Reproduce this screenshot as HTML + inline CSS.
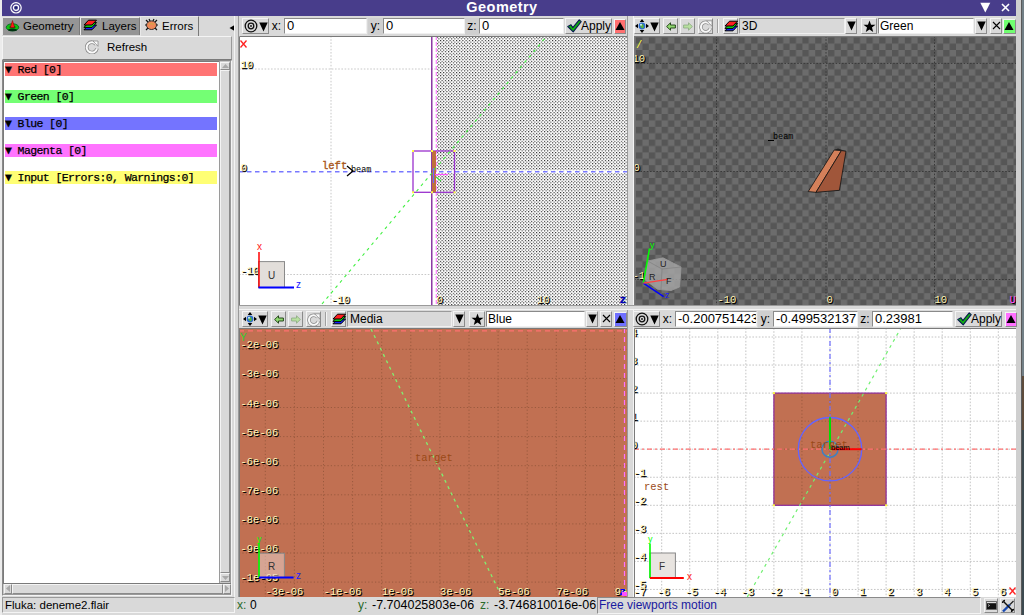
<!DOCTYPE html>
<html><head><meta charset="utf-8">
<style>
*{margin:0;padding:0;box-sizing:border-box}
html,body{width:1024px;height:615px;overflow:hidden;background:#d9d9d9;font-family:"Liberation Sans",sans-serif;font-size:12px;color:#000}
.a{position:absolute}
.mono{font-family:"Liberation Mono",monospace}
#title{left:2px;top:0;width:1022px;height:16px;background:#483d8b;color:#fff;font-weight:bold;font-size:14px;line-height:15px;text-align:center}
.tab{top:17px;height:18px;background:#959595;line-height:17px;font-size:11.5px;border-top:1px solid #e8e8e8;border-left:1px solid #e8e8e8;border-right:1px solid #7a7a7a}
.tab.sel{background:#d9d9d9;top:16px;height:20px}
.btn{border:1px solid;border-color:#f4f4f4 #8a8a8a #8a8a8a #f4f4f4;background:#d9d9d9}
.sunk{border:1px solid;border-color:#8a8a8a #f4f4f4 #f4f4f4 #8a8a8a}
.item{left:5px;width:212px;height:13px;line-height:13px;font-size:11.5px;letter-spacing:-0.6px;padding-left:0px;-webkit-text-stroke:0.25px #000}
.entry{background:#fff;border:1px solid;border-color:#8a8a8a #f0f0f0 #f0f0f0 #8a8a8a;height:16px;line-height:14px;padding-left:2px;font-size:13px;overflow:hidden;white-space:nowrap}
.cmb{background:#d9d9d9;border:1px solid;border-color:#9a9a9a #f0f0f0 #f0f0f0 #9a9a9a;height:17px;line-height:15px;padding-left:2px;font-size:12px;overflow:hidden;white-space:nowrap}
.lbl{height:17px;line-height:17px;font-size:12px;text-align:center}
.tb{height:17px;border:1px solid;border-color:#f4f4f4 #8a8a8a #8a8a8a #f4f4f4;background:#d9d9d9;text-align:center;line-height:15px;font-size:11px}
svg text{font-family:"Liberation Mono",monospace}
.ax{font-size:10.5px;fill:#fff4b8}
.axs{font-size:10.5px;fill:#000;stroke:#000;stroke-width:0.3}
</style></head><body>
<div class="a" style="left:0;top:0;width:2px;height:615px;background:#ececec"></div>
<div class="a" style="left:2px;top:0;width:1014px;height:16px;background:#483d8b"></div>
<div class="a" style="left:462px;top:0;width:80px;height:15px;color:#fff;font-weight:bold;font-size:14.5px;line-height:14px;text-align:center;letter-spacing:0.45px">Geometry</div>
<svg class="a" style="left:9px;top:1px" width="14" height="14" viewBox="0 0 14 14"><circle cx="7" cy="6.8" r="5.2" fill="none" stroke="#fff" stroke-width="1.2"/><circle cx="7" cy="6.8" r="2.6" fill="none" stroke="#fff" stroke-width="1.2"/><circle cx="7" cy="6.8" r="1" fill="#102070"/></svg>
<svg class="a" style="left:980px;top:2px" width="11" height="11" viewBox="0 0 11 11"><path d="M0.3 0.8 H10.3 L5.3 10.5 Z" fill="#fff"/></svg>
<svg class="a" style="left:1001px;top:3px" width="9" height="9" viewBox="0 0 9 9"><path d="M1 1 L8 8 M8 1 L1 8" stroke="#fff" stroke-width="1.6"/></svg>
<div class="a" style="left:1016px;top:0;width:5px;height:615px;background:#cfcfcf"></div>
<div class="a" style="left:1021px;top:0;width:1px;height:615px;background:#5a5a5a"></div>
<div class="a" style="left:1022px;top:0;width:2px;height:376px;background:#727f86"></div>
<div class="a" style="left:1022px;top:376px;width:2px;height:54px;background:#5e4c3c"></div>
<div class="a" style="left:1022px;top:430px;width:2px;height:185px;background:#3c4a50"></div>
<div class="a" style="left:2px;top:16px;width:196px;height:1px;background:#d9d9d9"></div>
<div class="a tab" style="left:2px;width:78px"><span style="position:absolute;left:20px;top:0px">Geometry</span></div>
<div class="a tab" style="left:80px;width:60px"><span style="position:absolute;left:21px;top:0px">Layers</span></div>
<div class="a tab sel" style="left:140px;width:59px"><span style="position:absolute;left:21px;top:1px">Errors</span></div>
<svg class="a" style="left:5px;top:19px" width="15" height="13" viewBox="0 0 15 13"><ellipse cx="7.5" cy="8.3" rx="6.3" ry="3.6" fill="#10c010" stroke="#062" stroke-width="0.8"/><ellipse cx="7.5" cy="8" rx="3" ry="1.6" fill="#0a5010"/><path d="M5.3 8.6 L7.5 1.5 L9.7 8.6 Z" fill="#ff1a1a" stroke="#800" stroke-width="0.5"/><ellipse cx="7.5" cy="11" rx="4.5" ry="1.2" fill="#031"/></svg>
<svg class="a" style="left:83px;top:19px" width="15" height="13" viewBox="0 0 15 13"><path d="M1 10.8 L5.5 6 H13.5 L9 10.8 Z" fill="#1020ff" stroke="#000" stroke-width="1"/><path d="M1 8.4 L5.5 3.6 H13.5 L9 8.4 Z" fill="#10e010" stroke="#000" stroke-width="1"/><path d="M1 6 L5.5 1.2 H13.5 L9 6 Z" fill="#ff2020" stroke="#000" stroke-width="1"/></svg>
<svg class="a" style="left:144px;top:18px" width="15" height="14" viewBox="0 0 15 14"><path d="M2 2 L4 4 M13 2 L11 4 M1 7 L3 7 M14 7 L12 7 M2 12 L4 10 M13 12 L11 10 M5 1 L6 3 M10 1 L9 3" stroke="#111" stroke-width="1.2"/><ellipse cx="7.5" cy="7.2" rx="5" ry="4.3" fill="#f08858" stroke="#222" stroke-width="0.9"/><path d="M5 6.5 Q7.5 4.5 10 6.5" stroke="#c8b040" stroke-width="0.9" fill="none"/></svg>
<svg class="a" style="left:229px;top:24px" width="7" height="8" viewBox="0 0 7 8"><path d="M6.5 0.5 V7.5 L0.5 4 Z" fill="#000"/></svg>
<div class="a" style="left:2px;top:36px;width:230px;height:24px;background:#d9d9d9;border:1px solid;border-color:#f4f4f4 #9a9a9a #7a7a7a #f4f4f4"></div>
<svg class="a" style="left:85px;top:40px" width="14" height="14" viewBox="0 0 14 14"><path d="M11.3 4.6 A5.2 5.2 0 1 0 12 8.4" fill="none" stroke="#8a8a8a" stroke-width="3.6"/><path d="M11.3 4.6 A5.2 5.2 0 1 0 12 8.4" fill="none" stroke="#fafafa" stroke-width="2"/><path d="M8 1 L13 1 L13 6.3 Z" fill="#fafafa" stroke="#8a8a8a" stroke-width="0.8"/></svg>
<div class="a" style="left:107px;top:39px;font-size:11.5px;line-height:17px">Refresh</div>
<div class="a" style="left:2px;top:60px;width:230px;height:536px;border:1px solid;border-color:#8a8a8a #f4f4f4 #f4f4f4 #8a8a8a"></div>
<div class="a" style="left:3px;top:61px;width:216px;height:522px;background:#fff;border-top:1px solid #7a7a7a;border-left:1px solid #7a7a7a"></div>
<div class="a item mono" style="top:63px;background:#ff7474">&#9660; Red [0]</div>
<div class="a item mono" style="top:90px;background:#74ff74">&#9660; Green [0]</div>
<div class="a item mono" style="top:117px;background:#7474ff">&#9660; Blue [0]</div>
<div class="a item mono" style="top:144px;background:#ff74ff">&#9660; Magenta [0]</div>
<div class="a item mono" style="top:171px;background:#ffff74">&#9660; Input [Errors:0, Warnings:0]</div>
<div class="a" style="left:219px;top:61px;width:12px;height:522px;background:#c8c8c8;border-left:1px solid #9a9a9a;border-right:1px solid #9a9a9a"></div>
<div class="a" style="left:220px;top:62px;width:10px;height:8px;background:#d9d9d9;border:1px solid;border-color:#f4f4f4 #8a8a8a #8a8a8a #f4f4f4"></div>
<svg class="a" style="left:222px;top:64px" width="7" height="4" viewBox="0 0 7 4"><path d="M0 4 L3.5 0 L7 4 Z" fill="#a8a8a8"/></svg>
<div class="a" style="left:220px;top:70px;width:10px;height:503px;background:#d9d9d9;border:1px solid;border-color:#f4f4f4 #8a8a8a #8a8a8a #f4f4f4"></div>
<div class="a" style="left:220px;top:573px;width:10px;height:9px;background:#d9d9d9;border:1px solid;border-color:#f4f4f4 #8a8a8a #8a8a8a #f4f4f4"></div>
<svg class="a" style="left:222px;top:576px" width="7" height="4" viewBox="0 0 7 4"><path d="M0 0 L3.5 4 L7 0 Z" fill="#a8a8a8"/></svg>
<div class="a" style="left:3px;top:583px;width:228px;height:12px;background:#c8c8c8;border-top:1px solid #7a7a7a;border-bottom:1px solid #9a9a9a"></div>
<div class="a" style="left:4px;top:584px;width:8px;height:10px;background:#d9d9d9;border:1px solid;border-color:#f4f4f4 #8a8a8a #8a8a8a #f4f4f4"></div>
<svg class="a" style="left:6px;top:585px" width="4" height="7" viewBox="0 0 4 7"><path d="M4 0 L0 3.5 L4 7 Z" fill="#a8a8a8"/></svg>
<div class="a" style="left:12px;top:584px;width:211px;height:10px;background:#d9d9d9;border:1px solid;border-color:#f4f4f4 #8a8a8a #8a8a8a #f4f4f4"></div>
<div class="a" style="left:223px;top:584px;width:8px;height:10px;background:#d9d9d9;border:1px solid;border-color:#f4f4f4 #8a8a8a #8a8a8a #f4f4f4"></div>
<svg class="a" style="left:225px;top:585px" width="4" height="7" viewBox="0 0 4 7"><path d="M0 0 L4 3.5 L0 7 Z" fill="#a8a8a8"/></svg>
<div class="a" style="left:2px;top:597px;width:233px;height:16px;border:1px solid;border-color:#9a9a9a #f4f4f4 #f4f4f4 #9a9a9a;line-height:14px;padding-left:2px;font-size:11.5px">Fluka: deneme2.flair</div>
<svg class="a" style="left:239px;top:36px" width="391" height="269" viewBox="239 36 391 269"><defs><pattern id="stip" x="0" y="0" width="3.2" height="3.2" patternUnits="userSpaceOnUse"><rect width="3.2" height="3.2" fill="#fff"/><rect x="0" y="0" width="1.05" height="1.05" fill="#111"/><rect x="1.6" y="1.6" width="1.05" height="1.05" fill="#111"/></pattern></defs><rect x="239" y="36" width="391" height="269" fill="#fff"/><line x1="331" y1="36" x2="331" y2="305" stroke="#c8c8c8" stroke-width="1" stroke-dasharray="1.6 1.6" /><line x1="534" y1="36" x2="534" y2="305" stroke="#c8c8c8" stroke-width="1" stroke-dasharray="1.6 1.6" /><line x1="637" y1="36" x2="637" y2="305" stroke="#c8c8c8" stroke-width="1" stroke-dasharray="1.6 1.6" /><line x1="239" y1="69" x2="630" y2="69" stroke="#c8c8c8" stroke-width="1" stroke-dasharray="1.6 1.6" /><line x1="239" y1="274.5" x2="630" y2="274.5" stroke="#c8c8c8" stroke-width="1" stroke-dasharray="1.6 1.6" /><rect x="437" y="36" width="193" height="269" fill="url(#stip)"/><line x1="239" y1="171.7" x2="630" y2="171.7" stroke="#ffffff" stroke-width="3" /><line x1="239" y1="171.7" x2="630" y2="171.7" stroke="#7878ff" stroke-width="1.4" stroke-dasharray="4.5 3.5" /><line x1="431.8" y1="36" x2="431.8" y2="305" stroke="#7a1a96" stroke-width="1.3" /><line x1="436.3" y1="36" x2="436.3" y2="305" stroke="#ff80ff" stroke-width="1.2" stroke-dasharray="4 2" /><rect x="413" y="151" width="41.5" height="41.3" fill="none" stroke="#9a32cd" stroke-width="1.3"/><rect x="432" y="151" width="4" height="41.3" fill="#c0703c"/><rect x="412" y="150" width="2" height="2" fill="#ffff40"/><rect x="453.5" y="150" width="2" height="2" fill="#ffff40"/><rect x="412" y="191.3" width="2" height="2" fill="#ffff40"/><rect x="453.5" y="191.3" width="2" height="2" fill="#ffff40"/><rect x="431" y="150" width="2" height="2" fill="#ffff40"/><rect x="431" y="191.3" width="2" height="2" fill="#ffff40"/><line x1="433.5" y1="168" x2="433.5" y2="183" stroke="#6a6aff" stroke-width="1.2" /><line x1="435" y1="174.5" x2="448" y2="174.5" stroke="#ff50ff" stroke-width="1.2" /><line x1="436" y1="177" x2="441" y2="181" stroke="#40e040" stroke-width="1.2" /><line x1="322" y1="304" x2="546" y2="37" stroke="#40f040" stroke-width="1.1" stroke-dasharray="3 4" /><text x="241.5" y="69.0" class="axs" style="font-size:10.5px">10</text><text x="240.5" y="68.0" class="ax" style="font-size:10.5px">10</text><text x="241.5" y="171.5" class="axs" style="font-size:10.5px">0</text><text x="240.5" y="170.5" class="ax" style="font-size:10.5px">0</text><text x="241.5" y="275.0" class="axs" style="font-size:10.5px">-10</text><text x="240.5" y="274.0" class="ax" style="font-size:10.5px">-10</text><text x="332.0" y="303.5" class="axs" style="font-size:10.5px">-10</text><text x="331.0" y="302.5" class="ax" style="font-size:10.5px">-10</text><text x="437.5" y="303.5" class="axs" style="font-size:10.5px">0</text><text x="436.5" y="302.5" class="ax" style="font-size:10.5px">0</text><text x="538.0" y="303.5" class="axs" style="font-size:10.5px">10</text><text x="537.0" y="302.5" class="ax" style="font-size:10.5px">10</text><text x="619.5" y="303" style="font-size:11.5px;fill:#0000e0;font-weight:bold;stroke:#000060;stroke-width:0.3">z</text><path d="M240.5 40.5 L246.5 47.5 M246.5 40.5 L240.5 47.5" stroke="#ff2020" stroke-width="1.3"/><text x="322" y="169" style="font-size:10.5px;fill:#a85820;stroke:#a85820;stroke-width:0.35">left</text><text x="351" y="172" style="font-size:8.5px;fill:#000">beam</text><path d="M347 166 L353 171 L347 176" fill="none" stroke="#000" stroke-width="1.3"/><rect x="258.5" y="261.6" width="26" height="26" fill="#e2deda" stroke="#8a8a8a" stroke-width="1"/><text x="268" y="279" style="font-size:10px;fill:#333;font-family:'Liberation Sans'">U</text><line x1="259" y1="252" x2="259" y2="287.5" stroke="#ff0000" stroke-width="1.5" /><line x1="258.5" y1="287.5" x2="294" y2="287.5" stroke="#0000ff" stroke-width="2" /><text x="257" y="250" style="font-size:10px;fill:#ff2020;font-family:'Liberation Sans'">x</text><text x="296" y="288" style="font-size:10px;fill:#2020ff;font-family:'Liberation Sans'">z</text><path d="M239.5 305 V36.5 H630" fill="none" stroke="#7a7a7a" stroke-width="1"/></svg>
<svg class="a" style="left:634px;top:36px" width="382" height="269" viewBox="634 36 382 269"><defs><pattern id="chk" x="636.0" y="37.2" width="12.8" height="12.8" patternUnits="userSpaceOnUse"><rect width="12.8" height="12.8" fill="#6c6c6c"/><rect width="6.4" height="6.4" fill="#565656"/><rect x="6.4" y="6.4" width="6.4" height="6.4" fill="#565656"/></pattern></defs><rect x="634" y="36" width="382" height="269" fill="#707070"/><rect x="636.0" y="37.2" width="380" height="268" fill="url(#chk)"/><line x1="716.5" y1="36" x2="716.5" y2="305" stroke="#3a3a3a" stroke-width="1" stroke-dasharray="1.6 1.6" /><line x1="826" y1="36" x2="826" y2="305" stroke="#3a3a3a" stroke-width="1" stroke-dasharray="1.6 1.6" /><line x1="934.5" y1="36" x2="934.5" y2="305" stroke="#3a3a3a" stroke-width="1" stroke-dasharray="1.6 1.6" /><line x1="634" y1="63.4" x2="1016" y2="63.4" stroke="#3a3a3a" stroke-width="1" stroke-dasharray="1.6 1.6" /><line x1="634" y1="171.5" x2="1016" y2="171.5" stroke="#3a3a3a" stroke-width="1" stroke-dasharray="1.6 1.6" /><line x1="634" y1="279.5" x2="1016" y2="279.5" stroke="#3a3a3a" stroke-width="1" stroke-dasharray="1.6 1.6" /><text x="633.5" y="63.0" class="axs" style="font-size:10.5px">10</text><text x="632.5" y="62.0" class="ax" style="font-size:10.5px">10</text><text x="634.5" y="171.5" class="axs" style="font-size:10.5px">0</text><text x="633.5" y="170.5" class="ax" style="font-size:10.5px">0</text><text x="633.5" y="279.5" class="axs" style="font-size:10.5px">-1</text><text x="632.5" y="278.5" class="ax" style="font-size:10.5px">-1</text><text x="718.5" y="303.5" class="axs" style="font-size:10.5px">-10</text><text x="717.5" y="302.5" class="ax" style="font-size:10.5px">-10</text><text x="827.5" y="303.5" class="axs" style="font-size:10.5px">0</text><text x="826.5" y="302.5" class="ax" style="font-size:10.5px">0</text><text x="935.5" y="303.5" class="axs" style="font-size:10.5px">10</text><text x="934.5" y="302.5" class="ax" style="font-size:10.5px">10</text><text x="1010.5" y="303.5" style="font-size:10.5px;fill:#000;font-weight:bold">U</text><text x="1009.5" y="302.5" style="font-size:10.5px;fill:#ff50ff">U</text><text x="636" y="48" style="font-size:10.5px;fill:#ffff40">/</text><polygon points="808.2,191.6 834.2,150 841.4,150.6 816,192.3" fill="#d4805a" stroke="#111" stroke-width="0.8"/><polygon points="816,192.3 841.4,150.6 846,151.2 839.4,190.3" fill="#a0563a" stroke="#111" stroke-width="0.8"/><polygon points="834.2,150 838,148.5 846,151.2 841.4,150.6" fill="#222"/><text x="773" y="139" style="font-size:8.5px;fill:#000">beam</text><line x1="768" y1="140.5" x2="774" y2="140.5" stroke="#000" stroke-width="1" /><polygon points="647.6,261 663,257.8 681,267 679.7,286.9 671,290.6 657.5,289.3 644.5,279.4" fill="#a8a8a8" fill-opacity="0.8" stroke="#9a9a9a" stroke-width="0.8"/><path d="M647.6 261 L662 269 L681 267 M662 269 L661 290" fill="none" stroke="#808080" stroke-width="0.7"/><line x1="643.3" y1="283.2" x2="649.5" y2="248.5" stroke="#00ff00" stroke-width="1.5" /><line x1="643.3" y1="283.2" x2="663.7" y2="296.7" stroke="#0000ff" stroke-width="1.5" /><line x1="643.3" y1="283.2" x2="668" y2="279.4" stroke="#ff4040" stroke-width="1.2" /><text x="660" y="267" style="font-size:9px;fill:#222;font-family:'Liberation Sans'">U</text><text x="649" y="280" style="font-size:9px;fill:#222;font-family:'Liberation Sans'">R</text><text x="666" y="284" style="font-size:9px;fill:#222;font-family:'Liberation Sans'">F</text><text x="650" y="248" style="font-size:9px;fill:#00ff00;font-family:'Liberation Sans'">y</text><text x="665" y="298" style="font-size:9px;fill:#2020ff;font-family:'Liberation Sans'">z</text><path d="M634.5 305 V36.5 H1016" fill="none" stroke="#7a7a7a" stroke-width="1"/></svg>
<svg class="a" style="left:239px;top:328px" width="391" height="269" viewBox="239 328 391 269"><rect x="239" y="328" width="391" height="269" fill="#c17052"/><line x1="265.3" y1="328" x2="265.3" y2="597" stroke="#9a5a3e" stroke-width="1" stroke-dasharray="1.2 2.2" /><line x1="294.40000000000003" y1="328" x2="294.40000000000003" y2="597" stroke="#9a5a3e" stroke-width="1" stroke-dasharray="1.2 2.2" /><line x1="323.5" y1="328" x2="323.5" y2="597" stroke="#9a5a3e" stroke-width="1" stroke-dasharray="1.2 2.2" /><line x1="352.6" y1="328" x2="352.6" y2="597" stroke="#9a5a3e" stroke-width="1" stroke-dasharray="1.2 2.2" /><line x1="381.70000000000005" y1="328" x2="381.70000000000005" y2="597" stroke="#9a5a3e" stroke-width="1" stroke-dasharray="1.2 2.2" /><line x1="410.8" y1="328" x2="410.8" y2="597" stroke="#9a5a3e" stroke-width="1" stroke-dasharray="1.2 2.2" /><line x1="439.90000000000003" y1="328" x2="439.90000000000003" y2="597" stroke="#9a5a3e" stroke-width="1" stroke-dasharray="1.2 2.2" /><line x1="469.0" y1="328" x2="469.0" y2="597" stroke="#9a5a3e" stroke-width="1" stroke-dasharray="1.2 2.2" /><line x1="498.1" y1="328" x2="498.1" y2="597" stroke="#9a5a3e" stroke-width="1" stroke-dasharray="1.2 2.2" /><line x1="527.2" y1="328" x2="527.2" y2="597" stroke="#9a5a3e" stroke-width="1" stroke-dasharray="1.2 2.2" /><line x1="556.3" y1="328" x2="556.3" y2="597" stroke="#9a5a3e" stroke-width="1" stroke-dasharray="1.2 2.2" /><line x1="585.4000000000001" y1="328" x2="585.4000000000001" y2="597" stroke="#9a5a3e" stroke-width="1" stroke-dasharray="1.2 2.2" /><line x1="614.5" y1="328" x2="614.5" y2="597" stroke="#9a5a3e" stroke-width="1" stroke-dasharray="1.2 2.2" /><line x1="239" y1="349.3" x2="630" y2="349.3" stroke="#9a5a3e" stroke-width="1" stroke-dasharray="1.2 2.2" /><line x1="239" y1="378.40000000000003" x2="630" y2="378.40000000000003" stroke="#9a5a3e" stroke-width="1" stroke-dasharray="1.2 2.2" /><line x1="239" y1="407.5" x2="630" y2="407.5" stroke="#9a5a3e" stroke-width="1" stroke-dasharray="1.2 2.2" /><line x1="239" y1="436.6" x2="630" y2="436.6" stroke="#9a5a3e" stroke-width="1" stroke-dasharray="1.2 2.2" /><line x1="239" y1="465.70000000000005" x2="630" y2="465.70000000000005" stroke="#9a5a3e" stroke-width="1" stroke-dasharray="1.2 2.2" /><line x1="239" y1="494.8" x2="630" y2="494.8" stroke="#9a5a3e" stroke-width="1" stroke-dasharray="1.2 2.2" /><line x1="239" y1="523.9000000000001" x2="630" y2="523.9000000000001" stroke="#9a5a3e" stroke-width="1" stroke-dasharray="1.2 2.2" /><line x1="239" y1="553.0" x2="630" y2="553.0" stroke="#9a5a3e" stroke-width="1" stroke-dasharray="1.2 2.2" /><line x1="239" y1="582.1" x2="630" y2="582.1" stroke="#9a5a3e" stroke-width="1" stroke-dasharray="1.2 2.2" /><line x1="239" y1="330.8" x2="630" y2="330.8" stroke="#ff7070" stroke-width="1.2" stroke-dasharray="5 4" /><line x1="624.5" y1="328" x2="624.5" y2="597" stroke="#ff70ff" stroke-width="1.2" stroke-dasharray="5 4" /><line x1="371" y1="329" x2="502" y2="597" stroke="#80f070" stroke-width="1.3" stroke-dasharray="3 4" /><text x="241.5" y="349.3" class="axs" style="font-size:10.5px">-2e-06</text><text x="240.5" y="348.3" class="ax" style="font-size:10.5px">-2e-06</text><text x="241.5" y="378.40000000000003" class="axs" style="font-size:10.5px">-3e-06</text><text x="240.5" y="377.40000000000003" class="ax" style="font-size:10.5px">-3e-06</text><text x="241.5" y="407.5" class="axs" style="font-size:10.5px">-4e-06</text><text x="240.5" y="406.5" class="ax" style="font-size:10.5px">-4e-06</text><text x="241.5" y="436.6" class="axs" style="font-size:10.5px">-5e-06</text><text x="240.5" y="435.6" class="ax" style="font-size:10.5px">-5e-06</text><text x="241.5" y="465.70000000000005" class="axs" style="font-size:10.5px">-6e-06</text><text x="240.5" y="464.70000000000005" class="ax" style="font-size:10.5px">-6e-06</text><text x="241.5" y="494.8" class="axs" style="font-size:10.5px">-7e-06</text><text x="240.5" y="493.8" class="ax" style="font-size:10.5px">-7e-06</text><text x="241.5" y="523.9000000000001" class="axs" style="font-size:10.5px">-8e-06</text><text x="240.5" y="522.9000000000001" class="ax" style="font-size:10.5px">-8e-06</text><text x="241.5" y="553.0" class="axs" style="font-size:10.5px">-9e-06</text><text x="240.5" y="552.0" class="ax" style="font-size:10.5px">-9e-06</text><text x="241.5" y="582.1" class="axs" style="font-size:10.5px">-1e-05</text><text x="240.5" y="581.1" class="ax" style="font-size:10.5px">-1e-05</text><text x="266.5" y="595.5" class="axs" style="font-size:10.5px">-3e-06</text><text x="265.5" y="594.5" class="ax" style="font-size:10.5px">-3e-06</text><text x="324.7" y="595.5" class="axs" style="font-size:10.5px">-1e-06</text><text x="323.7" y="594.5" class="ax" style="font-size:10.5px">-1e-06</text><text x="382.9" y="595.5" class="axs" style="font-size:10.5px">1e-06</text><text x="381.9" y="594.5" class="ax" style="font-size:10.5px">1e-06</text><text x="441.1" y="595.5" class="axs" style="font-size:10.5px">3e-06</text><text x="440.1" y="594.5" class="ax" style="font-size:10.5px">3e-06</text><text x="499.3" y="595.5" class="axs" style="font-size:10.5px">5e-06</text><text x="498.3" y="594.5" class="ax" style="font-size:10.5px">5e-06</text><text x="557.5" y="595.5" class="axs" style="font-size:10.5px">7e-06</text><text x="556.5" y="594.5" class="ax" style="font-size:10.5px">7e-06</text><text x="615.7" y="595.5" class="axs" style="font-size:10.5px">9e-06</text><text x="614.7" y="594.5" class="ax" style="font-size:10.5px">9e-06</text><text x="620" y="595" style="font-size:9px;fill:#0000ff;font-weight:bold">Z</text><rect x="622" y="592" width="5" height="4" fill="#ff50ff"/><text x="240" y="341" style="font-size:10px;fill:#30d030;font-family:'Liberation Sans'">Y</text><text x="415" y="461" style="font-size:10.5px;fill:#9a4a18">target</text><rect x="259.4" y="553.2" width="25" height="24.4" fill="#e8d0c8" fill-opacity="0.55" stroke="#888" stroke-width="1"/><text x="268" y="570" style="font-size:10px;fill:#333;font-family:'Liberation Sans'">R</text><line x1="259" y1="543" x2="259" y2="577.6" stroke="#00ff00" stroke-width="1.6" /><line x1="259" y1="577.6" x2="293.6" y2="577.6" stroke="#0000ff" stroke-width="2" /><text x="257" y="542" style="font-size:9px;fill:#00ff00;font-family:'Liberation Sans'">y</text><text x="296" y="579" style="font-size:10px;fill:#2020ff;font-family:'Liberation Sans'">z</text><path d="M239.5 597 V328.5 H630" fill="none" stroke="#7a7a7a" stroke-width="1"/></svg>
<svg class="a" style="left:634px;top:328px" width="382" height="269" viewBox="634 328 382 269"><rect x="634" y="328" width="382" height="269" fill="#fff"/><line x1="633.65" y1="328" x2="633.65" y2="597" stroke="#c4c4c4" stroke-width="1" stroke-dasharray="1.6 1.6" /><line x1="661.7" y1="328" x2="661.7" y2="597" stroke="#c4c4c4" stroke-width="1" stroke-dasharray="1.6 1.6" /><line x1="689.75" y1="328" x2="689.75" y2="597" stroke="#c4c4c4" stroke-width="1" stroke-dasharray="1.6 1.6" /><line x1="717.8" y1="328" x2="717.8" y2="597" stroke="#c4c4c4" stroke-width="1" stroke-dasharray="1.6 1.6" /><line x1="745.85" y1="328" x2="745.85" y2="597" stroke="#c4c4c4" stroke-width="1" stroke-dasharray="1.6 1.6" /><line x1="773.9" y1="328" x2="773.9" y2="597" stroke="#c4c4c4" stroke-width="1" stroke-dasharray="1.6 1.6" /><line x1="801.95" y1="328" x2="801.95" y2="597" stroke="#c4c4c4" stroke-width="1" stroke-dasharray="1.6 1.6" /><line x1="830.0" y1="328" x2="830.0" y2="597" stroke="#c4c4c4" stroke-width="1" stroke-dasharray="1.6 1.6" /><line x1="858.05" y1="328" x2="858.05" y2="597" stroke="#c4c4c4" stroke-width="1" stroke-dasharray="1.6 1.6" /><line x1="886.1" y1="328" x2="886.1" y2="597" stroke="#c4c4c4" stroke-width="1" stroke-dasharray="1.6 1.6" /><line x1="914.15" y1="328" x2="914.15" y2="597" stroke="#c4c4c4" stroke-width="1" stroke-dasharray="1.6 1.6" /><line x1="942.2" y1="328" x2="942.2" y2="597" stroke="#c4c4c4" stroke-width="1" stroke-dasharray="1.6 1.6" /><line x1="970.25" y1="328" x2="970.25" y2="597" stroke="#c4c4c4" stroke-width="1" stroke-dasharray="1.6 1.6" /><line x1="998.3" y1="328" x2="998.3" y2="597" stroke="#c4c4c4" stroke-width="1" stroke-dasharray="1.6 1.6" /><line x1="634" y1="308.95" x2="1016" y2="308.95" stroke="#c4c4c4" stroke-width="1" stroke-dasharray="1.6 1.6" /><line x1="634" y1="337.0" x2="1016" y2="337.0" stroke="#c4c4c4" stroke-width="1" stroke-dasharray="1.6 1.6" /><line x1="634" y1="365.04999999999995" x2="1016" y2="365.04999999999995" stroke="#c4c4c4" stroke-width="1" stroke-dasharray="1.6 1.6" /><line x1="634" y1="393.09999999999997" x2="1016" y2="393.09999999999997" stroke="#c4c4c4" stroke-width="1" stroke-dasharray="1.6 1.6" /><line x1="634" y1="421.15" x2="1016" y2="421.15" stroke="#c4c4c4" stroke-width="1" stroke-dasharray="1.6 1.6" /><line x1="634" y1="449.2" x2="1016" y2="449.2" stroke="#c4c4c4" stroke-width="1" stroke-dasharray="1.6 1.6" /><line x1="634" y1="477.25" x2="1016" y2="477.25" stroke="#c4c4c4" stroke-width="1" stroke-dasharray="1.6 1.6" /><line x1="634" y1="505.3" x2="1016" y2="505.3" stroke="#c4c4c4" stroke-width="1" stroke-dasharray="1.6 1.6" /><line x1="634" y1="533.35" x2="1016" y2="533.35" stroke="#c4c4c4" stroke-width="1" stroke-dasharray="1.6 1.6" /><line x1="634" y1="561.4" x2="1016" y2="561.4" stroke="#c4c4c4" stroke-width="1" stroke-dasharray="1.6 1.6" /><line x1="634" y1="589.45" x2="1016" y2="589.45" stroke="#c4c4c4" stroke-width="1" stroke-dasharray="1.6 1.6" /><rect x="773.9" y="393.09999999999997" width="112.2" height="112.2" fill="#c17052" stroke="#8a2a9a" stroke-width="1.2"/><line x1="801.95" y1="393.09999999999997" x2="801.95" y2="505.3" stroke="#9a5a3e" stroke-width="1" stroke-dasharray="1.2 2.2" /><line x1="773.9" y1="421.15" x2="886.1" y2="421.15" stroke="#9a5a3e" stroke-width="1" stroke-dasharray="1.2 2.2" /><line x1="830.0" y1="393.09999999999997" x2="830.0" y2="505.3" stroke="#9a5a3e" stroke-width="1" stroke-dasharray="1.2 2.2" /><line x1="773.9" y1="449.2" x2="886.1" y2="449.2" stroke="#9a5a3e" stroke-width="1" stroke-dasharray="1.2 2.2" /><line x1="858.05" y1="393.09999999999997" x2="858.05" y2="505.3" stroke="#9a5a3e" stroke-width="1" stroke-dasharray="1.2 2.2" /><line x1="773.9" y1="477.25" x2="886.1" y2="477.25" stroke="#9a5a3e" stroke-width="1" stroke-dasharray="1.2 2.2" /><line x1="634" y1="449.2" x2="1016" y2="449.2" stroke="#ff7070" stroke-width="1.2" stroke-dasharray="5 3 2 3" /><line x1="830.0" y1="328" x2="830.0" y2="597" stroke="#7070ff" stroke-width="1.2" stroke-dasharray="5 3 2 3" /><line x1="747.3" y1="597" x2="901" y2="328" stroke="#70f070" stroke-width="1.2" stroke-dasharray="3 4" /><circle cx="830.0" cy="449.2" r="31.7" fill="none" stroke="#6464ff" stroke-width="1.3"/><rect x="772.9" y="392.09999999999997" width="2" height="2" fill="#ffff40"/><rect x="772.9" y="504.3" width="2" height="2" fill="#ffff40"/><rect x="885.1" y="392.09999999999997" width="2" height="2" fill="#ffff40"/><rect x="885.1" y="504.3" width="2" height="2" fill="#ffff40"/><circle cx="830.0" cy="449.2" r="8" fill="none" stroke="#4080c0" stroke-width="1.5"/><line x1="830.0" y1="449.2" x2="861.7" y2="449.2" stroke="#ff0000" stroke-width="2" /><line x1="830.0" y1="449.2" x2="830.0" y2="417.3" stroke="#00e000" stroke-width="2" /><text x="810" y="448" style="font-size:10.5px;fill:#9a4a18">target</text><text x="831" y="450" style="font-size:7.5px;fill:#000;font-family:'Liberation Sans'">beam</text><text x="644" y="490" style="font-size:10.5px;fill:#9a4a18">rest</text><text x="632.0" y="337.0" class="axs" style="font-size:10.5px">4</text><text x="631.0" y="336.0" class="ax" style="font-size:10.5px">4</text><text x="632.0" y="365.04999999999995" class="axs" style="font-size:10.5px">3</text><text x="631.0" y="364.04999999999995" class="ax" style="font-size:10.5px">3</text><text x="632.0" y="393.09999999999997" class="axs" style="font-size:10.5px">2</text><text x="631.0" y="392.09999999999997" class="ax" style="font-size:10.5px">2</text><text x="632.0" y="421.15" class="axs" style="font-size:10.5px">1</text><text x="631.0" y="420.15" class="ax" style="font-size:10.5px">1</text><text x="632.0" y="449.2" class="axs" style="font-size:10.5px">0</text><text x="631.0" y="448.2" class="ax" style="font-size:10.5px">0</text><text x="634.5" y="477.25" class="axs" style="font-size:10.5px">-1</text><text x="633.5" y="476.25" class="ax" style="font-size:10.5px">-1</text><text x="634.5" y="505.3" class="axs" style="font-size:10.5px">-2</text><text x="633.5" y="504.3" class="ax" style="font-size:10.5px">-2</text><text x="634.5" y="533.35" class="axs" style="font-size:10.5px">-3</text><text x="633.5" y="532.35" class="ax" style="font-size:10.5px">-3</text><text x="634.5" y="561.4" class="axs" style="font-size:10.5px">-4</text><text x="633.5" y="560.4" class="ax" style="font-size:10.5px">-4</text><text x="634.5" y="589.45" class="axs" style="font-size:10.5px">-5</text><text x="633.5" y="588.45" class="ax" style="font-size:10.5px">-5</text><text x="634.5" y="595.5" class="axs" style="font-size:10.5px">-7</text><text x="633.5" y="594.5" class="ax" style="font-size:10.5px">-7</text><text x="658.2" y="595.5" class="axs" style="font-size:10.5px">-6</text><text x="657.2" y="594.5" class="ax" style="font-size:10.5px">-6</text><text x="686.25" y="595.5" class="axs" style="font-size:10.5px">-5</text><text x="685.25" y="594.5" class="ax" style="font-size:10.5px">-5</text><text x="714.3" y="595.5" class="axs" style="font-size:10.5px">-4</text><text x="713.3" y="594.5" class="ax" style="font-size:10.5px">-4</text><text x="742.35" y="595.5" class="axs" style="font-size:10.5px">-3</text><text x="741.35" y="594.5" class="ax" style="font-size:10.5px">-3</text><text x="770.4" y="595.5" class="axs" style="font-size:10.5px">-2</text><text x="769.4" y="594.5" class="ax" style="font-size:10.5px">-2</text><text x="798.45" y="595.5" class="axs" style="font-size:10.5px">-1</text><text x="797.45" y="594.5" class="ax" style="font-size:10.5px">-1</text><text x="832.5" y="595.5" class="axs" style="font-size:10.5px">0</text><text x="831.5" y="594.5" class="ax" style="font-size:10.5px">0</text><text x="860.55" y="595.5" class="axs" style="font-size:10.5px">1</text><text x="859.55" y="594.5" class="ax" style="font-size:10.5px">1</text><text x="888.6" y="595.5" class="axs" style="font-size:10.5px">2</text><text x="887.6" y="594.5" class="ax" style="font-size:10.5px">2</text><text x="916.65" y="595.5" class="axs" style="font-size:10.5px">3</text><text x="915.65" y="594.5" class="ax" style="font-size:10.5px">3</text><text x="944.7" y="595.5" class="axs" style="font-size:10.5px">4</text><text x="943.7" y="594.5" class="ax" style="font-size:10.5px">4</text><text x="972.75" y="595.5" class="axs" style="font-size:10.5px">5</text><text x="971.75" y="594.5" class="ax" style="font-size:10.5px">5</text><text x="1000.8" y="595.5" class="axs" style="font-size:10.5px">6</text><text x="999.8" y="594.5" class="ax" style="font-size:10.5px">6</text><path d="M1009.5 587.5 L1015.5 594.5 M1015.5 587.5 L1009.5 594.5" stroke="#ff2020" stroke-width="1.3"/><rect x="650" y="553" width="25.4" height="25" fill="#e8e4e0" stroke="#888" stroke-width="1"/><text x="659" y="570" style="font-size:10px;fill:#333;font-family:'Liberation Sans'">F</text><line x1="650" y1="543.5" x2="650" y2="578" stroke="#00ff00" stroke-width="1.6" /><line x1="650" y1="578" x2="683.8" y2="578" stroke="#ff0000" stroke-width="2" /><text x="648" y="542" style="font-size:9px;fill:#00ff00;font-family:'Liberation Sans'">y</text><text x="687" y="580" style="font-size:10px;fill:#ff2020;font-family:'Liberation Sans'">x</text><path d="M634.5 597 V328.5 H1016" fill="none" stroke="#7a7a7a" stroke-width="1"/></svg>
<div class="a" style="left:234px;top:16px;width:5px;height:581px;background:#d9d9d9;border-left:1px solid #f4f4f4;border-right:1px solid #9a9a9a"></div>
<div class="a" style="left:627px;top:16px;width:7px;height:581px;background:#d9d9d9;border-left:1px solid #9a9a9a;border-right:1px solid #f4f4f4"></div>
<div class="a" style="left:239px;top:305px;width:777px;height:5px;background:#d9d9d9;border-top:1px solid #9a9a9a;border-bottom:1px solid #f4f4f4"></div>
<div class="a tb" style="left:242px;top:18px;width:27px;height:16px;background:#d9d9d9;"></div>
<svg class="a" width="14" height="14" style="left:244px;top:19px" viewBox="0 0 14 14"><circle cx="7" cy="7" r="5.8" fill="none" stroke="#111" stroke-width="1.3"/><circle cx="7" cy="7" r="2.8" fill="none" stroke="#111" stroke-width="1.3"/><circle cx="7" cy="7" r="0.9" fill="#111"/></svg>
<svg class="a" width="9" height="10" style="left:259px;top:22px" viewBox="0 0 9 10"><path d="M0.3 0.5 H8.7 L4.5 9.5 Z" fill="#000"/></svg>
<div class="a lbl" style="left:269px;top:18px;width:15px;background:#d9d9d9;color:#000">x:</div>
<div class="a entry" style="left:284px;top:18px;width:83px;background:#fff;font-size:13px;padding-left:2px">0</div>
<div class="a lbl" style="left:368px;top:18px;width:15px;background:#cfcfcf;color:#000">y:</div>
<div class="a entry" style="left:383px;top:18px;width:82px;background:#fff;font-size:13px;padding-left:2px">0</div>
<div class="a lbl" style="left:465px;top:18px;width:14px;background:#cfcfcf;color:#000">z:</div>
<div class="a entry" style="left:479px;top:18px;width:85px;background:#fff;font-size:13px;padding-left:2px">0</div>
<div class="a tb" style="left:565px;top:18px;width:47px;height:16px;background:#d9d9d9;"></div>
<svg class="a" width="15" height="14" style="left:567px;top:19px" viewBox="0 0 15 14"><path d="M0.8 7.5 L4 5.8 L5.8 8.6 L12.2 0.8 L14.2 2.6 L6.2 12.8 Z" fill="#10b010" stroke="#0a1a50" stroke-width="1.1" stroke-linejoin="round"/></svg>
<div class="a" style="left:581px;top:18px;font-size:12px;line-height:16px">Apply</div>
<div class="a tb" style="left:614px;top:19px;width:12px;height:15px;background:#ff7070;"></div>
<svg class="a" width="10" height="10" style="left:615px;top:21px" viewBox="0 0 10 10"><path d="M0.5 9 H9.5 L5 1 Z" fill="#000"/></svg>
<div class="a tb" style="left:634px;top:18px;width:26px;height:16px;background:#d9d9d9;"></div>
<svg class="a" width="14" height="14" style="left:635px;top:19px" viewBox="0 0 14 14"><path d="M7 0 L9.3 3 H4.7 Z M7 14 L9.3 11 H4.7 Z M0 7 L3 4.7 V9.3 Z M14 7 L11 4.7 V9.3 Z" fill="#000"/><circle cx="7" cy="7" r="3.4" fill="#2a6ad0"/><path d="M5 5.5 Q7 4 8.5 6 Q9.5 8 8 9.5 Q6.5 9 5.5 8 Z" fill="#5ab040"/><circle cx="6" cy="5.8" r="1" fill="#d0e8ff"/></svg>
<svg class="a" width="9" height="10" style="left:650px;top:22px" viewBox="0 0 9 10"><path d="M0.3 0.5 H8.7 L4.5 9.5 Z" fill="#000"/></svg>
<div class="a tb" style="left:663px;top:18px;width:15px;height:16px;background:#d9d9d9;"></div>
<svg class="a" width="10" height="9" style="left:666px;top:22px" viewBox="0 0 10 9"><path d="M0.6 4.5 L4.5 0.8 V3 H9.4 V6 H4.5 V8.2 Z" fill="#90d870" stroke="#1a3a10" stroke-width="0.9"/></svg>
<div class="a tb" style="left:680px;top:18px;width:15px;height:16px;background:#d9d9d9;"></div>
<svg class="a" width="10" height="9" style="left:683px;top:22px" viewBox="0 0 10 9"><path d="M9.4 4.5 L5.5 0.8 V3 H0.6 V6 H5.5 V8.2 Z" fill="#b8e0a0" stroke="#8aa880" stroke-width="0.8"/></svg>
<div class="a tb" style="left:698px;top:18px;width:15px;height:16px;background:#d9d9d9;"></div>
<svg class="a" width="14" height="13" style="left:699px;top:20px" viewBox="0 0 14 13"><path d="M10.6 4.2 A4.8 4.8 0 1 0 11.4 8.2" fill="none" stroke="#8a8a8a" stroke-width="3.4"/><path d="M10.6 4.2 A4.8 4.8 0 1 0 11.4 8.2" fill="none" stroke="#f8f8f8" stroke-width="1.9"/><path d="M7.6 0.8 L13 0.8 L13 6.2 Z" fill="#f8f8f8" stroke="#8a8a8a" stroke-width="0.8"/></svg>
<div class="a" style="left:717px;top:19px;width:2px;height:14px;border-left:1px solid #a0a0a0;border-right:1px solid #f4f4f4"></div>
<div class="a tb" style="left:723px;top:18px;width:15px;height:16px;background:#d9d9d9;"></div>
<svg class="a" width="15" height="13" style="left:724px;top:20px" viewBox="0 0 15 13"><path d="M1 10.8 L5.5 6 H13.5 L9 10.8 Z" fill="#1020ff" stroke="#000" stroke-width="1"/><path d="M1 8.4 L5.5 3.6 H13.5 L9 8.4 Z" fill="#10e010" stroke="#000" stroke-width="1"/><path d="M1 6 L5.5 1.2 H13.5 L9 6 Z" fill="#ff2020" stroke="#000" stroke-width="1"/></svg>
<div class="a cmb" style="left:739px;top:18px;width:106px;height:16px;line-height:14px">3D</div>
<div class="a tb" style="left:845px;top:18px;width:12px;height:16px;background:#d9d9d9;"></div>
<svg class="a" width="9" height="10" style="left:847px;top:21px" viewBox="0 0 9 10"><path d="M0.3 0.5 H8.7 L4.5 9.5 Z" fill="#000"/></svg>
<div class="a tb" style="left:861px;top:18px;width:16px;height:16px;background:#d9d9d9;"></div>
<svg class="a" width="13" height="13" style="left:863px;top:20px" viewBox="0 0 13 13"><polygon points="6.50,0.50 8.03,4.70 12.49,4.85 8.97,7.60 10.20,11.90 6.50,9.40 2.80,11.90 4.03,7.60 0.51,4.85 4.97,4.70" fill="#000"/></svg>
<div class="a entry" style="left:878px;top:18px;width:96px;background:#fff;font-size:12px;padding-left:1px">Green</div>
<div class="a tb" style="left:975px;top:18px;width:12px;height:16px;background:#d9d9d9;"></div>
<svg class="a" width="9" height="10" style="left:977px;top:21px" viewBox="0 0 9 10"><path d="M0.3 0.5 H8.7 L4.5 9.5 Z" fill="#000"/></svg>
<div class="a tb" style="left:990px;top:18px;width:12px;height:16px;background:#d9d9d9;"></div>
<svg class="a" width="9" height="9" style="left:992px;top:21px" viewBox="0 0 9 9"><path d="M1 1 L8 8 M8 1 L1 8" stroke="#000" stroke-width="1.1"/></svg>
<div class="a tb" style="left:1003px;top:19px;width:13px;height:15px;background:#70ff70;"></div>
<svg class="a" width="10" height="10" style="left:1004px;top:21px" viewBox="0 0 10 10"><path d="M0.5 9 H9.5 L5 1 Z" fill="#000"/></svg>
<div class="a tb" style="left:242px;top:311px;width:26px;height:16px;background:#d9d9d9;"></div>
<svg class="a" width="14" height="14" style="left:243px;top:312px" viewBox="0 0 14 14"><path d="M7 0 L9.3 3 H4.7 Z M7 14 L9.3 11 H4.7 Z M0 7 L3 4.7 V9.3 Z M14 7 L11 4.7 V9.3 Z" fill="#000"/><circle cx="7" cy="7" r="3.4" fill="#2a6ad0"/><path d="M5 5.5 Q7 4 8.5 6 Q9.5 8 8 9.5 Q6.5 9 5.5 8 Z" fill="#5ab040"/><circle cx="6" cy="5.8" r="1" fill="#d0e8ff"/></svg>
<svg class="a" width="9" height="10" style="left:258px;top:315px" viewBox="0 0 9 10"><path d="M0.3 0.5 H8.7 L4.5 9.5 Z" fill="#000"/></svg>
<div class="a tb" style="left:271px;top:311px;width:15px;height:16px;background:#d9d9d9;"></div>
<svg class="a" width="10" height="9" style="left:274px;top:315px" viewBox="0 0 10 9"><path d="M0.6 4.5 L4.5 0.8 V3 H9.4 V6 H4.5 V8.2 Z" fill="#90d870" stroke="#1a3a10" stroke-width="0.9"/></svg>
<div class="a tb" style="left:288px;top:311px;width:15px;height:16px;background:#d9d9d9;"></div>
<svg class="a" width="10" height="9" style="left:291px;top:315px" viewBox="0 0 10 9"><path d="M9.4 4.5 L5.5 0.8 V3 H0.6 V6 H5.5 V8.2 Z" fill="#b8e0a0" stroke="#8aa880" stroke-width="0.8"/></svg>
<div class="a tb" style="left:306px;top:311px;width:15px;height:16px;background:#d9d9d9;"></div>
<svg class="a" width="14" height="13" style="left:307px;top:313px" viewBox="0 0 14 13"><path d="M10.6 4.2 A4.8 4.8 0 1 0 11.4 8.2" fill="none" stroke="#8a8a8a" stroke-width="3.4"/><path d="M10.6 4.2 A4.8 4.8 0 1 0 11.4 8.2" fill="none" stroke="#f8f8f8" stroke-width="1.9"/><path d="M7.6 0.8 L13 0.8 L13 6.2 Z" fill="#f8f8f8" stroke="#8a8a8a" stroke-width="0.8"/></svg>
<div class="a" style="left:325px;top:312px;width:2px;height:14px;border-left:1px solid #a0a0a0;border-right:1px solid #f4f4f4"></div>
<div class="a tb" style="left:331px;top:311px;width:15px;height:16px;background:#d9d9d9;"></div>
<svg class="a" width="15" height="13" style="left:332px;top:313px" viewBox="0 0 15 13"><path d="M1 10.8 L5.5 6 H13.5 L9 10.8 Z" fill="#1020ff" stroke="#000" stroke-width="1"/><path d="M1 8.4 L5.5 3.6 H13.5 L9 8.4 Z" fill="#10e010" stroke="#000" stroke-width="1"/><path d="M1 6 L5.5 1.2 H13.5 L9 6 Z" fill="#ff2020" stroke="#000" stroke-width="1"/></svg>
<div class="a cmb" style="left:347px;top:311px;width:105px;height:16px;line-height:14px">Media</div>
<div class="a tb" style="left:453px;top:311px;width:12px;height:16px;background:#d9d9d9;"></div>
<svg class="a" width="9" height="10" style="left:455px;top:314px" viewBox="0 0 9 10"><path d="M0.3 0.5 H8.7 L4.5 9.5 Z" fill="#000"/></svg>
<div class="a tb" style="left:469px;top:311px;width:16px;height:16px;background:#d9d9d9;"></div>
<svg class="a" width="13" height="13" style="left:471px;top:313px" viewBox="0 0 13 13"><polygon points="6.50,0.50 8.03,4.70 12.49,4.85 8.97,7.60 10.20,11.90 6.50,9.40 2.80,11.90 4.03,7.60 0.51,4.85 4.97,4.70" fill="#000"/></svg>
<div class="a entry" style="left:486px;top:311px;width:99px;background:#fff;font-size:12px;padding-left:1px">Blue</div>
<div class="a tb" style="left:586px;top:311px;width:12px;height:16px;background:#d9d9d9;"></div>
<svg class="a" width="9" height="10" style="left:588px;top:314px" viewBox="0 0 9 10"><path d="M0.3 0.5 H8.7 L4.5 9.5 Z" fill="#000"/></svg>
<div class="a tb" style="left:600px;top:311px;width:12px;height:16px;background:#d9d9d9;"></div>
<svg class="a" width="9" height="9" style="left:602px;top:314px" viewBox="0 0 9 9"><path d="M1 1 L8 8 M8 1 L1 8" stroke="#000" stroke-width="1.1"/></svg>
<div class="a tb" style="left:614px;top:312px;width:13px;height:15px;background:#7070ff;"></div>
<svg class="a" width="10" height="10" style="left:615px;top:314px" viewBox="0 0 10 10"><path d="M0.5 9 H9.5 L5 1 Z" fill="#000"/></svg>
<div class="a tb" style="left:633px;top:311px;width:27px;height:16px;background:#d9d9d9;"></div>
<svg class="a" width="14" height="14" style="left:635px;top:312px" viewBox="0 0 14 14"><circle cx="7" cy="7" r="5.8" fill="none" stroke="#111" stroke-width="1.3"/><circle cx="7" cy="7" r="2.8" fill="none" stroke="#111" stroke-width="1.3"/><circle cx="7" cy="7" r="0.9" fill="#111"/></svg>
<svg class="a" width="9" height="10" style="left:650px;top:315px" viewBox="0 0 9 10"><path d="M0.3 0.5 H8.7 L4.5 9.5 Z" fill="#000"/></svg>
<div class="a lbl" style="left:660px;top:311px;width:15px;background:#d9d9d9;color:#000">x:</div>
<div class="a entry" style="left:675px;top:311px;width:82px;background:#fff;font-size:13px;padding-left:2px">-0.200751423</div>
<div class="a lbl" style="left:758px;top:311px;width:15px;background:#cfcfcf;color:#000">y:</div>
<div class="a entry" style="left:773px;top:311px;width:85px;background:#fff;font-size:13px;padding-left:2px">-0.499532137</div>
<div class="a lbl" style="left:858px;top:311px;width:14px;background:#cfcfcf;color:#000">z:</div>
<div class="a entry" style="left:872px;top:311px;width:81px;background:#fff;font-size:13px;padding-left:2px">0.23981</div>
<div class="a tb" style="left:955px;top:311px;width:47px;height:16px;background:#d9d9d9;"></div>
<svg class="a" width="15" height="14" style="left:957px;top:312px" viewBox="0 0 15 14"><path d="M0.8 7.5 L4 5.8 L5.8 8.6 L12.2 0.8 L14.2 2.6 L6.2 12.8 Z" fill="#10b010" stroke="#0a1a50" stroke-width="1.1" stroke-linejoin="round"/></svg>
<div class="a" style="left:971px;top:311px;font-size:12px;line-height:16px">Apply</div>
<div class="a tb" style="left:1005px;top:312px;width:12px;height:15px;background:#ff70ff;"></div>
<svg class="a" width="10" height="10" style="left:1006px;top:314px" viewBox="0 0 10 10"><path d="M0.5 9 H9.5 L5 1 Z" fill="#000"/></svg>
<div class="a" style="left:237px;top:597px;font-size:12px;line-height:17px;color:#2a6a2a">x:</div>
<div class="a" style="left:250px;top:597px;font-size:12px;line-height:17px">0</div>
<div class="a" style="left:358px;top:597px;font-size:12px;line-height:17px;color:#2a6a2a">y:</div>
<div class="a" style="left:372px;top:597px;font-size:12.5px;line-height:17px">-7.704025803e-06</div>
<div class="a" style="left:480px;top:597px;font-size:12px;line-height:17px;color:#2a6a2a">z:</div>
<div class="a" style="left:494px;top:597px;font-size:12.5px;line-height:17px">-3.746810016e-06</div>
<div class="a sunk" style="left:597px;top:597px;width:384px;height:17px;line-height:15px;padding-left:1px;font-size:12px;color:#1a1aa0">Free viewports motion</div>
<div class="a tb" style="left:984px;top:598px;width:14px;height:15px;background:#d9d9d9;"></div>
<svg class="a" width="11" height="9" style="left:986px;top:601px" viewBox="0 0 11 9"><rect x="0.5" y="0.5" width="10" height="8" fill="#111" stroke="#666" stroke-width="0.8"/><rect x="1" y="1" width="9" height="1.2" fill="#ddd"/><path d="M2 3.5 L3.6 4.5 L2 5.5" stroke="#ddd" stroke-width="0.7" fill="none"/></svg>
<div class="a tb" style="left:1000px;top:598px;width:15px;height:15px;background:#d9d9d9;"></div>
<svg class="a" width="14" height="14" style="left:1001px;top:599px" viewBox="0 0 14 14"><path d="M2 12.5 L9 5.5" stroke="#1a4ab0" stroke-width="2.4"/><path d="M9 5.5 L12.5 2" stroke="#222" stroke-width="1.2"/><path d="M2.5 2.5 L12 12" stroke="#111" stroke-width="1.4"/><path d="M1.5 4 A2.5 2.5 0 0 1 4 1.5" stroke="#111" stroke-width="1.3" fill="none"/><path d="M10.5 13 A2.5 2.5 0 0 1 13 10.5" stroke="#111" stroke-width="1.3" fill="none"/></svg>
</body></html>
